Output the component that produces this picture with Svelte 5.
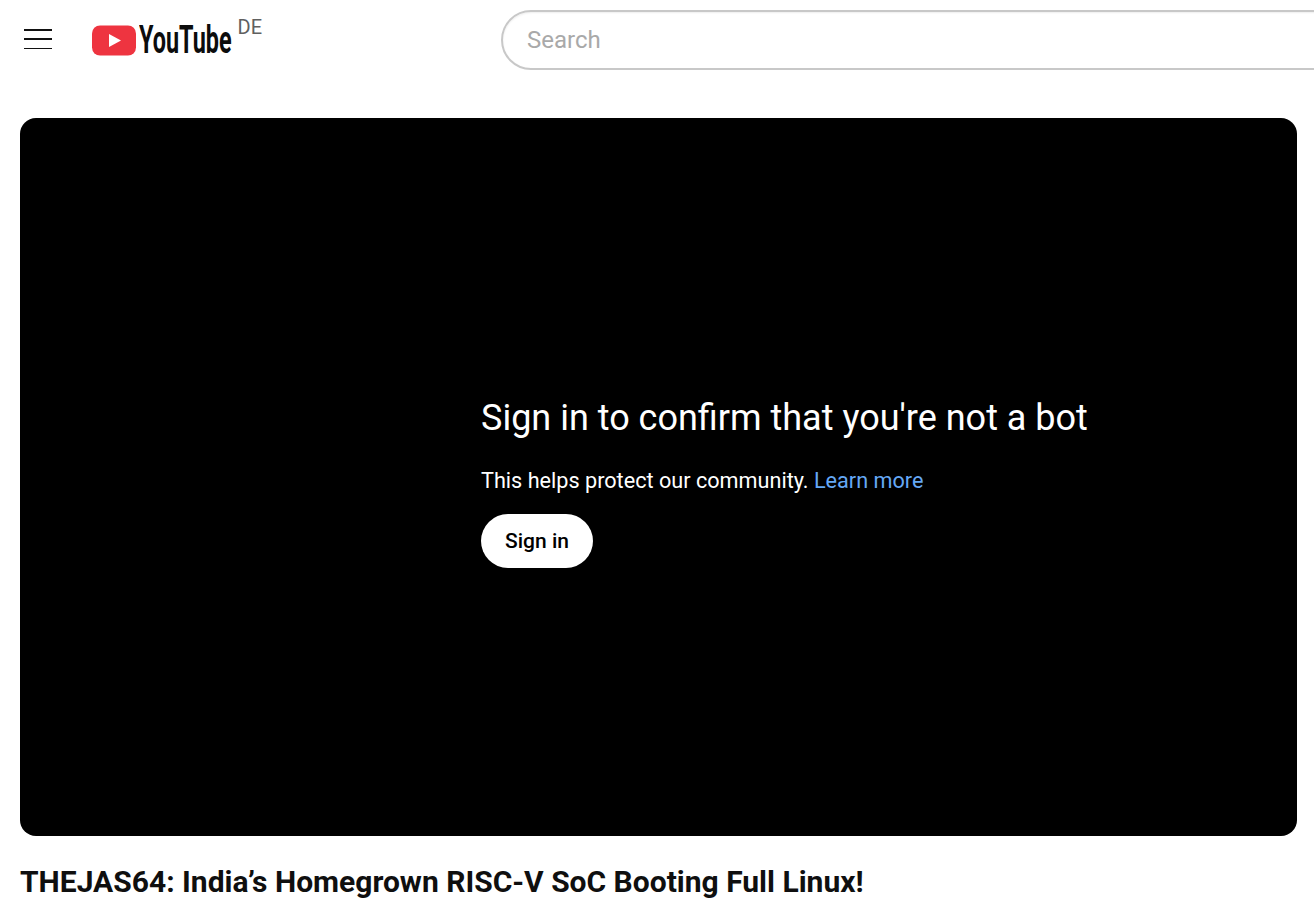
<script>
  const title = "THEJAS64: India’s Homegrown RISC-V SoC Booting Full Linux!";
</script>

<div class="page">
  <header class="masthead">
    <button class="menu" aria-label="Guide">
      <span></span><span></span><span></span>
    </button>
    <div class="logo">
      <svg class="mark" width="44" height="31" viewBox="0 0 44 31" aria-hidden="true">
        <rect x="0" y="0.5" width="44" height="30" rx="8" fill="#ee3440" />
        <path d="M17 9 L29 15.5 L17 22 Z" fill="#fff" />
      </svg>
      <span class="word">YouTube</span>
      <span class="region">DE</span>
    </div>
    <div class="search">
      <span class="placeholder">Search</span>
    </div>
  </header>

  <main class="content">
    <section class="player">
      <div class="prompt">
        <h2>Sign in to confirm that you're not a bot</h2>
        <p>This helps protect our community. <a href="#learn">Learn more</a></p>
        <button class="signin">Sign in</button>
      </div>
    </section>
    <h1>{title}</h1>
  </main>
</div>

<style>
  :global(body) {
    margin: 0;
    background: #fff;
    font-family: Roboto, "Liberation Sans", sans-serif;
    overflow: hidden;
  }
  .page {
    width: 1314px;
    height: 912px;
    overflow: hidden;
  }
  .masthead {
    height: 118px;
    box-sizing: border-box;
    padding: 10px 0 0 24px;
    display: flex;
    align-items: flex-start;
  }
  .menu {
    width: 28px;
    height: 20px;
    margin-top: 19px;
    padding: 0;
    border: 0;
    background: none;
    display: flex;
    flex-direction: column;
    justify-content: space-between;
  }
  .menu span {
    display: block;
    height: 1.5px;
    background: #111;
  }
  .logo {
    display: flex;
    align-items: flex-start;
    margin-left: 40px;
    width: 409px;
    height: 60px;
  }
  .mark {
    margin-top: 15px;
    flex: none;
  }
  .word {
    flex: none;
    margin-top: 16px;
    margin-left: 3px;
    font-weight: 700;
    font-size: 23.4px;
    line-height: 28px;
    white-space: nowrap;
    color: #0c0c0c;
    transform: scaleY(1.62);
    transform-origin: left center;
  }
  .region {
    margin-left: 6px;
    margin-top: 6px;
    font-size: 20px;
    line-height: 23px;
    color: #606060;
  }
  .search {
    flex: 1;
    height: 60px;
    box-sizing: border-box;
    margin-right: -60px;
    padding-left: 24px;
    border: 2px solid #c8c8c8;
    border-radius: 30px;
    display: flex;
    align-items: center;
    box-shadow: inset 0 1px 2px #eeeeee;
  }
  .placeholder {
    font-size: 24px;
    color: #a9a9a9;
  }
  .content {
    padding: 0 17px 0 20px;
  }
  .player {
    height: 718px;
    background: #000;
    border-radius: 16px;
    padding-left: 461px;
    padding-top: 277px;
    box-sizing: border-box;
  }
  h2 {
    margin: 0;
    font-size: 36px;
    line-height: 46px;
    font-weight: 400;
    color: #fff;
  }
  p {
    margin: 26px 0 0;
    font-size: 21.65px;
    line-height: 28px;
    color: #fff;
  }
  a {
    color: #65a8f5;
    text-decoration: none;
  }
  .signin {
    display: block;
    margin-top: 19px;
    width: 112px;
    height: 54px;
    padding: 0;
    border: 0;
    border-radius: 27px;
    background: #fff;
    color: #000;
    font-family: Roboto, sans-serif;
    font-size: 21px;
    font-weight: 500;
  }
  h1 {
    margin: 26px 0 0;
    font-size: 30px;
    line-height: 40px;
    font-weight: 700;
    color: #0f0f0f;
    white-space: nowrap;
  }
</style>
